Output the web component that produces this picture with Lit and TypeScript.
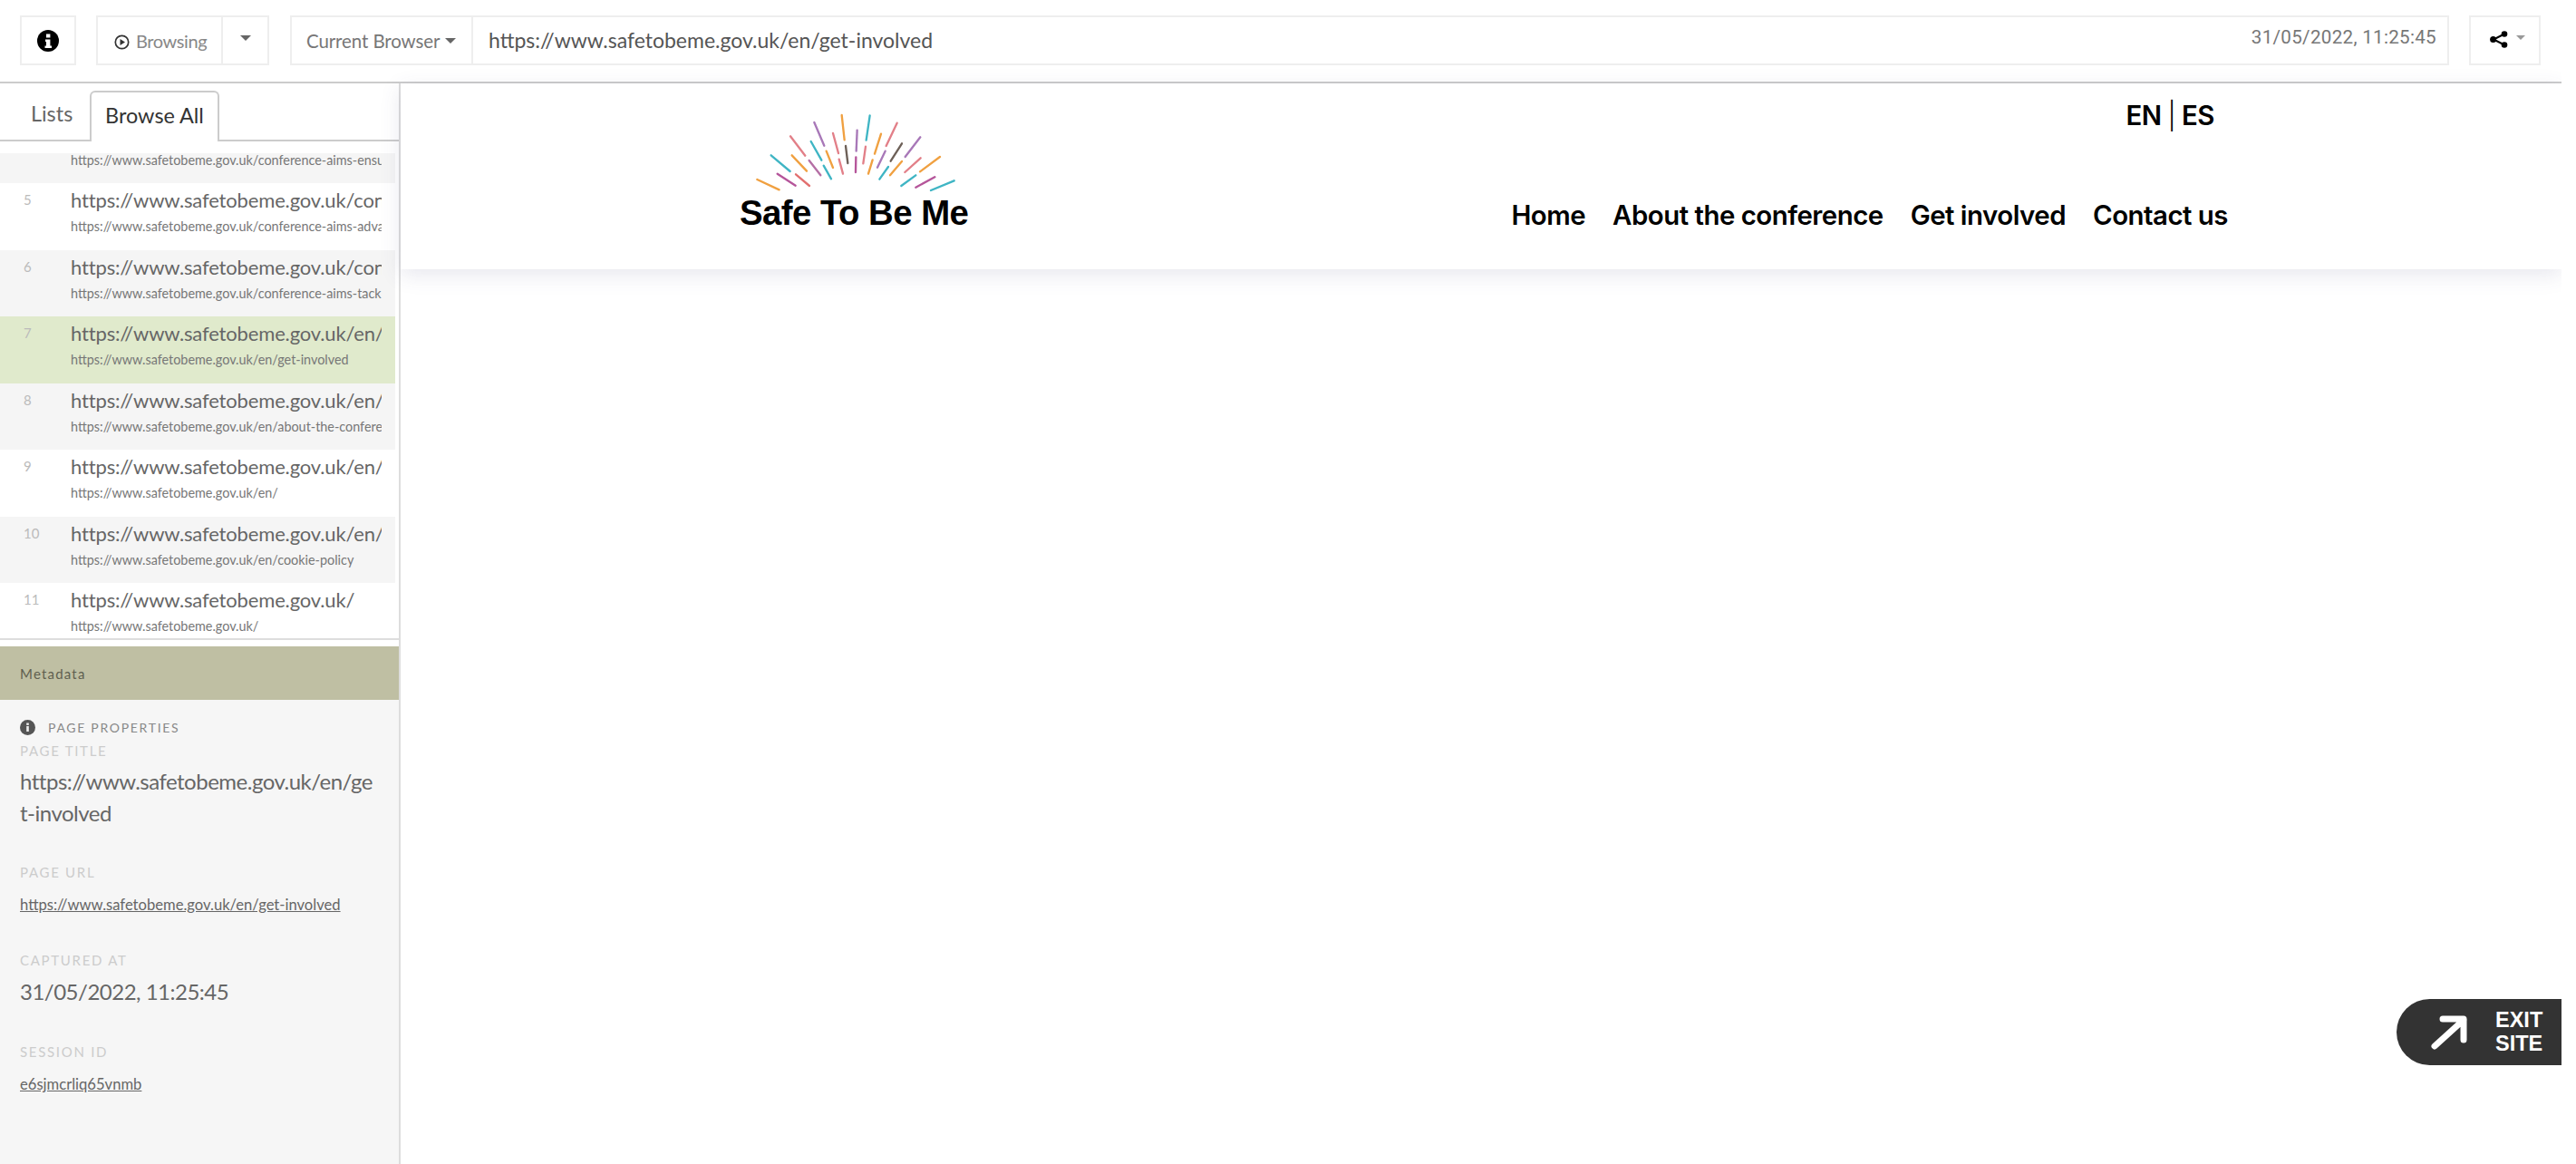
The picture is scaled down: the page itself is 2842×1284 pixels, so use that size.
import { LitElement, html, css, svg } from "lit";
import { customElement } from "lit/decorators.js";

const O = "#f0a040", T = "#3fb5c4", M = "#b5559a", S = "#e27f88", R = "#e2706f", P = "#a878b8", Q = "#b56fa5", D = "#6d6058";
const RAYS: [number, number, number, number, string][] = [
  [163,291,236,325,O],[209,211,272,264,T],[230,272,290,311,M],[273,148,322,212,S],[278,211,327,263,O],
  [291,274,336,312,R],[352,102,385,179,P],[341,165,376,227,T],[335,228,373,277,Q],[383,245,408,289,T],
  [392,197,414,252,O],[414,138,432,204,S],[434,224,447,272,S],[443,78,452,160,O],[456,180,463,237,D],
  [494,128,491,197,P],[490,217,489,267,M],[522,182,514,238,S],[536,79,524,161,T],[545,226,531,272,O],
  [573,140,552,206,O],[587,197,561,251,P],[626,104,590,180,S],[642,172,605,230,D],[597,249,568,290,T],
  [642,231,603,277,O],[703,151,653,216,P],[704,220,652,267,S],[768,216,702,265,O],[688,277,640,312,T],
  [751,283,688,317,M],[815,295,738,327,T],
];

const ROWS = [
  { n: 5, t: "https://www.safetobeme.gov.uk/conference-aims-advance", s: "https://www.safetobeme.gov.uk/conference-aims-advance-lgbt-rights" },
  { n: 6, t: "https://www.safetobeme.gov.uk/conference-aims-tackle", s: "https://www.safetobeme.gov.uk/conference-aims-tackle-violence" },
  { n: 7, t: "https://www.safetobeme.gov.uk/en/", s: "https://www.safetobeme.gov.uk/en/get-involved", active: true },
  { n: 8, t: "https://www.safetobeme.gov.uk/en/about", s: "https://www.safetobeme.gov.uk/en/about-the-conference" },
  { n: 9, t: "https://www.safetobeme.gov.uk/en/", s: "https://www.safetobeme.gov.uk/en/" },
  { n: 10, t: "https://www.safetobeme.gov.uk/en/", s: "https://www.safetobeme.gov.uk/en/cookie-policy" },
  { n: 11, t: "https://www.safetobeme.gov.uk/", s: "https://www.safetobeme.gov.uk/" },
];

const caret = (cls = "caret") => html`<span class=${cls}></span>`;

@customElement("app-root")
export class AppRoot extends LitElement {
  static styles = css`
    :host { display: block; width: 2826px; height: 1284px; position: relative; overflow: hidden; background: #fff;
      font-family: "Lato", "Liberation Sans", sans-serif; color: #555; }
    * { box-sizing: border-box; }
    .toolbar { height: 92px; border-bottom: 2px solid #ccc; display: flex; align-items: flex-start; padding: 17px 23px 0 22px; }
    .btn { height: 55px; border: 2px solid #eee; display: flex; align-items: center; background: #fff; }
    .info { width: 62px; justify-content: center; margin-right: 22px; }
    .group { display: flex; }
    .browsing { width: 140px; padding-left: 18px; gap: 7px; font-size: 20px; color: #888; letter-spacing: -.4px; }
    .drop { width: 53px; margin-left: -2px; justify-content: center; padding-bottom: 5px; margin-right: 23px; }
    .caret { width: 0; height: 0; border-left: 6px solid transparent; border-right: 6px solid transparent; border-top: 6px solid #666; }
    .current { width: 202px; padding-left: 16px; gap: 6px; font-size: 20.5px; color: #777; letter-spacing: -.1px; }
    .url { flex: 1; margin-left: -2px; justify-content: space-between; align-items: flex-start; padding: 0 12px 0 17px; }
    .url-text { font-size: 23px; line-height: 51px; color: #555; }
    .stamp { font-family: "Roboto", sans-serif; font-size: 20.6px; line-height: 44px; color: #777; letter-spacing: .3px; }
    .share { width: 79px; margin-left: 22px; padding: 0 0 2px 21px; gap: 9px; }
    .caret.small { border-left-width: 5px; border-right-width: 5px; border-top-width: 5px; border-top-color: #999; margin-bottom: 4px; }

    .main { display: flex; height: 1192px; }
    .side { width: 442px; border-right: 2px solid #ddd; display: flex; flex-direction: column; flex: none; }
    .tabs { height: 64px; border-bottom: 2px solid #ccc; display: flex; align-items: flex-end; padding-left: 34px; font-size: 23.4px; flex: none; }
    .tab { height: 56px; line-height: 54px; }
    .tab.lists { width: 65px; color: #666; }
    .tab.all { width: 143px; margin-bottom: -2px; height: 56px; line-height: 50px; text-align: center; color: #333; background: #fff; border: 2px solid #ccc; border-bottom: 0; border-radius: 6px 6px 0 0; }
    .list { margin-top: 13px; height: 537px; border-bottom: 2px solid #ddd; overflow: hidden; flex: none; }
    .row { height: 73.5px; width: 436px; padding: 0 15px 0 26px; display: grid; grid-template-columns: 52px 1fr; grid-template-rows: 38px 20px; overflow: hidden; }
    .row.odd { background: #f5f5f5; }
    .row.active { background: #e0eacc; }
    .row.partial { height: 33px; grid-template-rows: 16px; }
    .num { font-size: 15px; color: #bbb; line-height: 36px; }
    .title { font-size: 22px; line-height: 38px; color: #666; white-space: nowrap; overflow: hidden; letter-spacing: -.15px; }
    .sub { grid-column: 2; font-size: 14.4px; line-height: 20px; color: #777; white-space: nowrap; overflow: hidden; }
    .row.partial .sub { line-height: 16px; }
    .meta-head { margin-top: 7px; height: 59px; background: #bfbfa3; padding-left: 22px; font-size: 15px; letter-spacing: 1.2px; line-height: 61px; color: #5f5f50; flex: none; }
    .meta { flex: 1; background: #f6f6f6; padding: 22px 22px 0; }
    .props { display: flex; align-items: center; gap: 14px; height: 16px; font-size: 14px; letter-spacing: 1.7px; color: #888; }
    .label { font-size: 15px; letter-spacing: 1.7px; color: #ccc; height: 20px; line-height: 20px; }
    .val { font-size: 24px; line-height: 35px; color: #666; word-break: break-all; letter-spacing: -.5px; padding-right: 5px; }
    .link { font-size: 16.6px; line-height: 22px; color: #666; text-decoration: underline; }
    .l1 { margin-top: 8px; }
    .v1 { margin-top: 6px; }
    .l2 { margin-top: 38px; }
    .v2 { margin-top: 15px; }
    .l3 { margin-top: 40px; }
    .v3 { margin-top: 7px; }
    .l4 { margin-top: 39px; }

    .page { flex: 1; position: relative; }
    .header { height: 205px; background: #fff; box-shadow: 0 6px 22px rgba(70, 70, 120, .13); display: flex; justify-content: space-between; padding: 0 368px 0 339px; }
    .logo { display: block; margin-top: 29px; width: 320px; }
    .logo svg { display: block; margin-bottom: -18px; }
    .brand { font-family: "Liberation Sans", sans-serif; font-weight: 700; font-size: 38.4px; line-height: 44px; color: #000; letter-spacing: -.55px; padding-left: 35px; white-space: nowrap; }
    .right { display: flex; flex-direction: column; align-items: flex-end; font-family: "Inter", sans-serif; font-weight: 600; color: #000; font-size: 29.4px; letter-spacing: -.5px; }
    .lang { margin-top: 18px; margin-right: 15px; line-height: 36px; }
    .sep { font-weight: 300; }
    .nav { display: flex; gap: 30px; margin-top: 73px; line-height: 38px; }
    .exit { position: absolute; right: 0; bottom: 109px; width: 182px; height: 73px; background: #333; border-radius: 37px 0 0 37px; display: flex; align-items: center; padding-left: 38px; gap: 31px;
      font-family: "Liberation Sans", sans-serif; font-weight: 700; color: #fff; font-size: 23.5px; line-height: 26px; }
    .exit-text { padding-bottom: 2px; }
  `;

  render() {
    return html`
      <div class="toolbar">
        <div class="btn info">
          <svg width="24" height="24" viewBox="0 0 24 24"><circle cx="12" cy="12" r="12" fill="#000"/><rect x="10" y="4.5" width="4.4" height="4" fill="#fff"/><path d="M9 10.5h5.4v7H16v2.5H8.5v-2.5H10v-4.5H9z" fill="#fff"/></svg>
        </div>
        <div class="group">
          <div class="btn browsing">
            <svg width="17" height="17" viewBox="0 0 17 17" style="margin-top:4px"><circle cx="8.5" cy="8.5" r="7.2" fill="none" stroke="#333" stroke-width="1.7"/><path d="M6.5 5l5.5 3.5-5.5 3.5z" fill="#333"/></svg>
            Browsing
          </div>
          <div class="btn drop">${caret()}</div>
        </div>
        <div class="group" style="flex:1">
          <div class="btn current">Current Browser ${caret()}</div>
          <div class="btn url">
            <span class="url-text">https://www.safetobeme.gov.uk/en/get-involved</span>
            <span class="stamp">31/05/2022, 11:25:45</span>
          </div>
        </div>
        <div class="btn share">
          <svg width="20" height="19" viewBox="0 0 20 19"><path d="M16 3.5L4 9.5l12 6" fill="none" stroke="#000" stroke-width="2"/><circle cx="16" cy="3.5" r="3.3" fill="#000"/><circle cx="3.6" cy="9.5" r="3.5" fill="#000"/><circle cx="16" cy="15.5" r="3.3" fill="#000"/></svg>
          ${caret("caret small")}
        </div>
      </div>
      <div class="main">
        <aside class="side">
          <div class="tabs"><div class="tab lists">Lists</div><div class="tab all">Browse All</div></div>
          <div class="list">
            <div class="row odd partial"><span class="num"></span><span class="sub" style="grid-column:2">https://www.safetobeme.gov.uk/conference-aims-ensure-inclusion</span></div>
            ${ROWS.map((r, i) => html`
              <div class="row ${r.active ? "active" : i % 2 === 1 ? "odd" : ""}">
                <span class="num">${r.n}</span><span class="title">${r.t}</span><span class="sub">${r.s}</span>
              </div>`)}
          </div>
          <div class="meta-head">Metadata</div>
          <div class="meta">
            <div class="props">
              <svg width="17" height="17" viewBox="0 0 17 17"><circle cx="8.5" cy="8.5" r="8.5" fill="#555"/><rect x="7.2" y="3.5" width="2.6" height="2.4" fill="#eee"/><rect x="7.2" y="7" width="2.6" height="6" fill="#eee"/></svg>
              PAGE PROPERTIES
            </div>
            <div class="label l1">PAGE TITLE</div>
            <div class="val v1">https://www.safetobeme.gov.uk/en/get-involved</div>
            <div class="label l2">PAGE URL</div>
            <div class="link v2">https://www.safetobeme.gov.uk/en/get-involved</div>
            <div class="label l3">CAPTURED AT</div>
            <div class="val v3">31/05/2022, 11:25:45</div>
            <div class="label l4">SESSION ID</div>
            <div class="link v2">e6sjmcrliq65vnmb</div>
          </div>
        </aside>
        <main class="page">
          <header class="header">
            <div class="logo">
              <svg width="320" height="110" viewBox="0 60 960 330">
                ${RAYS.map(([a, b, c, d, col]) => svg`<line x1=${a} y1=${b} x2=${c} y2=${d} stroke=${col} stroke-width="7" stroke-linecap="round"/>`)}
              </svg>
              <div class="brand">Safe To Be Me</div>
            </div>
            <div class="right">
              <div class="lang">EN <span class="sep">|</span> ES</div>
              <nav class="nav"><span>Home</span><span>About the conference</span><span>Get involved</span><span>Contact us</span></nav>
            </div>
          </header>
          <div class="exit">
            <svg width="40" height="38" viewBox="0 0 40 38"><path d="M4 34L36 5M13 4h23v23" fill="none" stroke="#fff" stroke-width="7" stroke-linecap="round" stroke-linejoin="round"/></svg>
            <div class="exit-text">EXIT<br>SITE</div>
          </div>
        </main>
      </div>
    `;
  }
}
